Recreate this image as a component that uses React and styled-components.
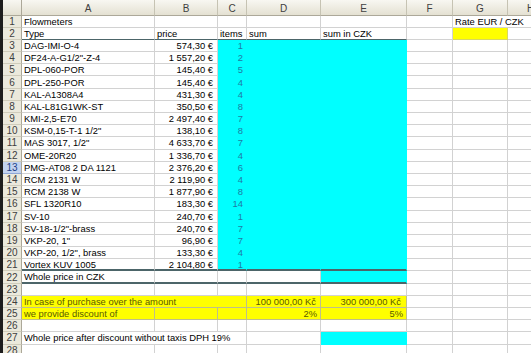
import React from "react";
import styled, { createGlobalStyle } from "styled-components";

const GlobalStyle = createGlobalStyle`
    html, body {
        margin: 0;
        padding: 0;
        background: #ffffff;
    }
    body {
        font-family: "Liberation Sans", Arial, sans-serif;
    }
`;

const CYAN = "#00ffff";
const YELLOW = "#ffff00";
const GRID = "#d2d2d2";
const DARK = "#4c6569";

const colWidths = [133, 63, 29, 74, 86, 46, 55, 46];
const letters = ["A", "B", "C", "D", "E", "F", "G", "H"];

const items = [
    ["DAG-IMI-O-4", "574,30 €", 1],
    ["DF24-A-G1/2\"-Z-4", "1 557,20 €", 2],
    ["DPL-060-POR", "145,40 €", 5],
    ["DPL-250-POR", "145,40 €", 4],
    ["KAL-A1308A4", "431,30 €", 4],
    ["KAL-L81G1WK-ST", "350,50 €", 8],
    ["KMI-2,5-E70", "2 497,40 €", 7],
    ["KSM-0,15-T-1 1/2\"", "138,10 €", 8],
    ["MAS 3017, 1/2\"", "4 633,70 €", 7],
    ["OME-20R20", "1 336,70 €", 4],
    ["PMG-AT08 2 DA 1121", "2 376,20 €", 6],
    ["RCM 2131 W", "2 119,90 €", 4],
    ["RCM 2138 W", "1 877,90 €", 8],
    ["SFL 1320R10", "183,30 €", 14],
    ["SV-10", "240,70 €", 1],
    ["SV-18-1/2\"-brass", "240,70 €", 7],
    ["VKP-20, 1\"", "96,90 €", 7],
    ["VKP-20, 1/2\", brass", "133,30 €", 4],
    ["Vortex KUV 1005", "2 104,80 €", 1],
];

const Window = styled.div`
    width: 531px;
    height: 353px;
    overflow: hidden;
    box-sizing: border-box;
    border-left: 3px solid #1d1d1d;
    background: #ffffff;
`;

const Sheet = styled.div`
    display: grid;
    width: max-content;
    grid-template-columns: 19px ${colWidths.map((w) => `${w}px`).join(" ")};
    grid-template-rows: 15.5px repeat(28, 12.2px);
    font-size: 9.4px;
`;

const Corner = styled.div`
    box-sizing: border-box;
    background: linear-gradient(#f8f7f2, #e4e1d2);
    border-right: 1px solid #aca899;
    border-bottom: 1px solid #aca899;
`;

const ColHead = styled.div`
    box-sizing: border-box;
    display: flex;
    align-items: center;
    justify-content: center;
    padding-top: 2px;
    background: linear-gradient(#f8f7f2, #e4e1d2);
    border-right: 1px solid #c6c3b3;
    border-bottom: 1px solid #aca899;
    color: #404040;
    font-size: 10px;
`;

const RowHead = styled.div`
    box-sizing: border-box;
    display: flex;
    align-items: center;
    justify-content: center;
    background: ${(p) => (p.$active ? "#c3d3ef" : "#ebe9dc")};
    border-right: 1px solid #aca899;
    border-bottom: 1px solid ${(p) => (p.$active ? "#8ea6d6" : "#cfccbb")};
    color: ${(p) => (p.$active ? "#1d3f86" : "#404040")};
    font-size: 10px;
`;

const Cell = styled.div`
    grid-column: span ${(p) => p.$span};
    box-sizing: border-box;
    display: flex;
    align-items: center;
    justify-content: ${(p) => (p.$align === "right" ? "flex-end" : "flex-start")};
    padding: 0 ${(p) => p.$padRight}px 0 2px;
    background: ${(p) => p.$fill};
    border-right: 1px solid ${(p) => p.$grid};
    border-bottom: ${(p) => p.$edge || `1px solid ${p.$grid}`};
    color: ${(p) => p.$color};
    white-space: nowrap;
    overflow: hidden;
`;

function rowCells(r) {
    const cells = Array.from({ length: 8 }, () => ({
        span: 1,
        text: "",
        align: "left",
        fill: "#ffffff",
        grid: GRID,
        color: "#000000",
        pad: 3,
        edge: null,
    }));

    if (r === 1) {
        cells[0].text = "Flowmeters";
        cells[6].text = "Rate EUR / CZK";
        cells[6].span = 2;
    }
    if (r === 2) {
        ["Type", "price", "items", "sum", "sum in CZK"].forEach((t, i) => {
            cells[i].text = t;
            cells[i].edge = `1px solid ${DARK}`;
        });
        cells[6].fill = YELLOW;
        cells[6].grid = "#d8d860";
    }
    if (r >= 3 && r <= 21) {
        const [name, price, count] = items[r - 3];
        cells[0].text = name;
        cells[1].text = price;
        cells[1].align = "right";
        cells[1].pad = 4;
        cells[2].text = String(count);
        cells[2].align = "right";
        cells[2].color = "#1f7aa3";
        for (let c = 2; c <= 4; c++) {
            cells[c].fill = CYAN;
            cells[c].grid = CYAN;
        }
        if (r === 21) {
            for (let c = 0; c <= 4; c++) cells[c].edge = `2px solid ${DARK}`;
        }
    }
    if (r === 22) {
        cells[0].text = "Whole price in CZK";
        cells[4].fill = CYAN;
        cells[4].grid = CYAN;
        for (let c = 0; c <= 4; c++) cells[c].edge = `2px solid ${DARK}`;
    }
    if (r === 24 || r === 25) {
        for (let c = 0; c <= 4; c++) {
            cells[c].fill = YELLOW;
            cells[c].grid = "#bebe8c";
            cells[c].color = "#5a5a00";
        }
        cells[3].align = "right";
        cells[4].align = "right";
        if (r === 24) {
            cells[0].text = "In case of purchase over the amount";
            cells[0].span = 3;
            cells[3].text = "100 000,00 Kč";
            cells[4].text = "300 000,00 Kč";
            cells[3].pad = 4;
            cells[4].pad = 5;
        } else {
            cells[0].text = "we provide discount of";
            cells[3].text = "2%";
            cells[4].text = "5%";
        }
    }
    if (r === 27) {
        cells[0].text = "Whole price after discount without taxis DPH 19%";
        cells[0].span = 3;
        cells[4].fill = CYAN;
        cells[4].grid = CYAN;
    }

    const out = [];
    for (let c = 0; c < 8; ) {
        out.push({ ...cells[c], col: c });
        c += cells[c].span;
    }
    return out;
}

export default function App() {
    const rows = Array.from({ length: 28 }, (_, i) => i + 1);

    return (
        <>
            <GlobalStyle />
            <Window>
                <Sheet>
                    <Corner />
                    {letters.map((l) => (
                        <ColHead key={l}>{l}</ColHead>
                    ))}
                    {rows.map((r) => (
                        <React.Fragment key={r}>
                            <RowHead $active={r === 13}>{r}</RowHead>
                            {rowCells(r).map((c) => (
                                <Cell
                                    key={c.col}
                                    $span={c.span}
                                    $align={c.align}
                                    $fill={c.fill}
                                    $grid={c.grid}
                                    $color={c.color}
                                    $padRight={c.pad}
                                    $edge={c.edge}
                                >
                                    {c.text}
                                </Cell>
                            ))}
                        </React.Fragment>
                    ))}
                </Sheet>
            </Window>
        </>
    );
}
